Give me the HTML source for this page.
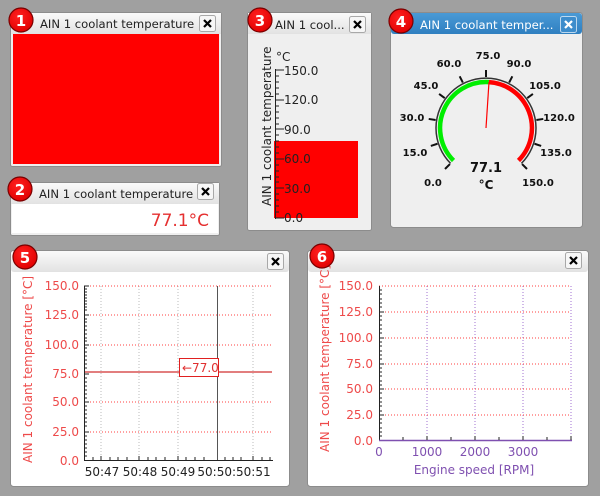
<!DOCTYPE html>
<html><head><meta charset="utf-8"><style>
html,body{margin:0;padding:0;background:#a0a0a0;}
svg{display:block;font-family:"DejaVu Sans","Liberation Sans",sans-serif;}
</style></head><body>
<svg width="600" height="496" viewBox="0 0 600 496" xmlns="http://www.w3.org/2000/svg">
<defs>
<linearGradient id="tg" x1="0" y1="0" x2="0" y2="1"><stop offset="0" stop-color="#fafafa"/><stop offset="1" stop-color="#e2e2e2"/></linearGradient>
<linearGradient id="bg" x1="0" y1="0" x2="0" y2="1"><stop offset="0" stop-color="#4a9ad6"/><stop offset="1" stop-color="#2f7fc0"/></linearGradient>
<radialGradient id="rb" cx="0.4" cy="0.35" r="0.7"><stop offset="0" stop-color="#ff2020"/><stop offset="1" stop-color="#e00000"/></radialGradient>
<g id="xb"><rect x="0.5" y="0.5" width="16" height="16" rx="2" fill="#f6f6f6" stroke="#a8a8a8"/><path d="M5 5L12 12M12 5L5 12" stroke="#000" stroke-width="2.2"/></g>
<g id="xw"><rect x="0.5" y="0.5" width="16" height="16" rx="2" fill="#3d8dcc" stroke="#bcd8ef"/><path d="M5 5L12 12M12 5L5 12" stroke="#fff" stroke-width="2.2"/></g>
</defs>
<rect width="600" height="496" fill="#a0a0a0"/>

<!-- Window 1 -->
<rect x="10.5" y="12.5" width="211" height="154" fill="#efefef" stroke="#8c8c8c" rx="2"/>
<rect x="11" y="13" width="210" height="21" fill="url(#tg)"/>
<text x="40" y="28" font-size="11.6" fill="#222">AIN 1 coolant temperature</text>
<use href="#xb" x="199" y="15"/>
<rect x="13" y="34" width="206" height="130" fill="#ff0000"/>

<!-- Window 2 -->
<rect x="10.5" y="182.5" width="209" height="53" fill="#efefef" stroke="#8c8c8c" rx="2"/>
<rect x="11" y="183" width="208" height="21" fill="url(#tg)"/>
<text x="39" y="198" font-size="11.6" fill="#222">AIN 1 coolant temperature</text>
<use href="#xb" x="197" y="183"/>
<rect x="12" y="204" width="206" height="29" fill="#fff"/>
<text x="209" y="226" font-size="17" fill="#e53030" text-anchor="end">77.1°C</text>

<!-- Window 3 -->
<rect x="247.5" y="12.5" width="124" height="218" fill="#efefef" stroke="#8c8c8c" rx="2"/>
<rect x="248" y="13" width="123" height="21" fill="url(#tg)"/>
<text x="275" y="29" font-size="11.6" fill="#222">AIN 1 cool...</text>
<use href="#xb" x="349" y="16"/>
<rect x="274" y="141" width="84" height="77" fill="#ff0000"/>
<g stroke="#222" stroke-width="1">
<line x1="275.5" y1="69" x2="275.5" y2="219"/>
<line x1="275" y1="70" x2="284" y2="70"/><line x1="275" y1="100" x2="284" y2="100"/><line x1="275" y1="129" x2="284" y2="129"/><line x1="275" y1="159" x2="284" y2="159"/><line x1="275" y1="188" x2="284" y2="188"/><line x1="275" y1="218" x2="284" y2="218"/>
</g>
<g stroke="#222">
<path d="M275 76h4M275 82h4M275 88h4M275 94h4M275 106h4M275 112h4M275 118h4M275 124h4M275 135h4M275 141h4M275 147h4M275 153h4M275 165h4M275 171h4M275 177h4M275 182h4M275 194h4M275 200h4M275 206h4M275 212h4"/>
</g>
<g font-size="12" fill="#222">
<text x="276" y="61">°C</text>
<text x="284" y="75">150.0</text><text x="284" y="104">120.0</text><text x="284" y="134">90.0</text><text x="284" y="163">60.0</text><text x="284" y="193">30.0</text><text x="284" y="222">0.0</text>
</g>
<text transform="translate(271,206) rotate(-90)" font-size="12" fill="#222">AIN 1 coolant temperature</text>

<!-- Window 4 -->
<rect x="390.5" y="12.5" width="192" height="215" fill="#efefef" stroke="#8c8c8c" rx="3"/>
<rect x="391" y="13" width="191" height="21" fill="url(#bg)" rx="3"/>
<text x="420" y="29" font-size="11.6" fill="#fff">AIN 1 coolant temper...</text>
<use href="#xw" x="560" y="16"/>
<path d="M450.6 163.4 A50 50 0 1 1 521.4 163.4" fill="none" stroke="#333" stroke-width="1.5"/>
<path d="M453.5 160.5 A46 46 0 0 1 488.9 82.1" fill="none" stroke="#00ee00" stroke-width="4.5"/>
<path d="M488.9 82.1 A46 46 0 0 1 518.5 160.5" fill="none" stroke="#ff0000" stroke-width="4.5"/>
<g stroke="#111" stroke-width="2">
<line x1="486" y1="77" x2="486" y2="70" transform="rotate(-135 486 128)"/>
<line x1="486" y1="77" x2="486" y2="70" transform="rotate(-108 486 128)"/>
<line x1="486" y1="77" x2="486" y2="70" transform="rotate(-81 486 128)"/>
<line x1="486" y1="77" x2="486" y2="70" transform="rotate(-54 486 128)"/>
<line x1="486" y1="77" x2="486" y2="70" transform="rotate(-27 486 128)"/>
<line x1="486" y1="77" x2="486" y2="70"/>
<line x1="486" y1="77" x2="486" y2="70" transform="rotate(27 486 128)"/>
<line x1="486" y1="77" x2="486" y2="70" transform="rotate(54 486 128)"/>
<line x1="486" y1="77" x2="486" y2="70" transform="rotate(81 486 128)"/>
<line x1="486" y1="77" x2="486" y2="70" transform="rotate(108 486 128)"/>
<line x1="486" y1="77" x2="486" y2="70" transform="rotate(135 486 128)"/>
</g>
<line x1="486" y1="128" x2="489" y2="82" stroke="#ff0000" stroke-width="1.2"/>
<g font-size="10" font-weight="bold" fill="#111" text-anchor="middle">
<text x="433" y="186">0.0</text><text x="415" y="156">15.0</text><text x="412" y="121">30.0</text><text x="426" y="89">45.0</text><text x="449" y="67">60.0</text><text x="488" y="59">75.0</text><text x="519" y="67">90.0</text><text x="545" y="89">105.0</text><text x="559" y="121">120.0</text><text x="556" y="156">135.0</text><text x="538" y="186">150.0</text>
<text x="486" y="172" font-size="13">77.1</text><text x="486" y="189" font-size="12">°C</text>
</g>

<!-- Window 5 -->
<rect x="10.5" y="250.5" width="279" height="236" fill="#fff" stroke="#8c8c8c" rx="3"/>
<rect x="11" y="251" width="278" height="21" fill="url(#tg)" rx="3"/>
<use href="#xb" x="267" y="253"/>
<g stroke="#bbb" stroke-dasharray="1,2"><line x1="101" y1="286" x2="101" y2="460"/><line x1="139" y1="286" x2="139" y2="460"/><line x1="178" y1="286" x2="178" y2="460"/><line x1="253" y1="286" x2="253" y2="460"/></g>
<g stroke="#ff4040" stroke-dasharray="1,2"><line x1="84" y1="286" x2="272" y2="286"/><line x1="84" y1="315" x2="272" y2="315"/><line x1="84" y1="345" x2="272" y2="345"/><line x1="84" y1="402" x2="272" y2="402"/><line x1="84" y1="432" x2="272" y2="432"/></g>
<line x1="84" y1="372" x2="272" y2="372" stroke="#d03030" stroke-width="1.2"/>
<line x1="217.5" y1="286" x2="217.5" y2="461" stroke="#555" stroke-width="1"/>
<line x1="84.5" y1="286" x2="84.5" y2="461" stroke="#222"/>
<line x1="84" y1="460.5" x2="273" y2="460.5" stroke="#222"/>
<path d="M84 289h3M84 292h3M84 295h3M84 298h3M84 301h3M84 304h3M84 307h3M84 310h3M84 319h3M84 322h3M84 326h3M84 330h3M84 334h3M84 338h3M84 341h3M84 348h3M84 352h3M84 356h3M84 360h3M84 364h3M84 368h3M84 378h3M84 382h3M84 386h3M84 390h3M84 394h3M84 398h3M84 406h3M84 410h3M84 414h3M84 418h3M84 422h3M84 426h3M84 436h3M84 440h3M84 444h3M84 448h3M84 452h3M84 456h3M84 286h5M84 315h5M84 345h5M84 374h5M84 402h5M84 432h5" stroke="#222"/>
<path d="M93 460v-3M101 460v-4M110 460v-3M118 460v-3M127 460v-3M139 460v-4M148 460v-3M156 460v-3M165 460v-3M178 460v-4M186 460v-3M195 460v-3M204 460v-3M225 460v-3M233 460v-3M241 460v-3M253 460v-4M262 460v-3M270 460v-3" stroke="#222"/>
<rect x="179.5" y="358.5" width="39" height="18" fill="#fff" stroke="#e02020"/>
<text x="182" y="372" font-size="12" fill="#e03030">←77.0</text>
<g font-size="12" fill="#ee4a4a" text-anchor="end">
<text x="79" y="290">150.0</text><text x="79" y="319">125.0</text><text x="79" y="349">100.0</text><text x="79" y="378">75.0</text><text x="79" y="406">50.0</text><text x="79" y="436">25.0</text><text x="79" y="465">0.0</text>
</g>
<text transform="translate(32,463) rotate(-90)" font-size="12" fill="#ee4a4a">AIN 1 coolant temperature [°C]</text>
<g font-size="12" fill="#222" text-anchor="middle"><text x="102" y="476">50:47</text><text x="140" y="476">50:48</text><text x="178" y="476">50:49</text><text x="234" y="476">50:50:50:51</text></g>

<!-- Window 6 -->
<rect x="307.5" y="250.5" width="281" height="236" fill="#fff" stroke="#8c8c8c" rx="3"/>
<rect x="308" y="251" width="280" height="21" fill="url(#tg)" rx="3"/>
<use href="#xb" x="565" y="252"/>
<g stroke="#a070d0" stroke-dasharray="1,2"><line x1="427" y1="286" x2="427" y2="440"/><line x1="475" y1="286" x2="475" y2="440"/><line x1="523" y1="286" x2="523" y2="440"/><line x1="571" y1="286" x2="571" y2="440"/></g>
<g stroke="#ff4040" stroke-dasharray="1,2"><line x1="379" y1="286" x2="571" y2="286"/><line x1="379" y1="312" x2="571" y2="312"/><line x1="379" y1="338" x2="571" y2="338"/><line x1="379" y1="364" x2="571" y2="364"/><line x1="379" y1="389" x2="571" y2="389"/><line x1="379" y1="415" x2="571" y2="415"/></g>
<line x1="379.5" y1="286" x2="379.5" y2="441" stroke="#222"/>
<line x1="379" y1="440.5" x2="572" y2="440.5" stroke="#7f50b0" stroke-width="1.5"/>
<path d="M379 290h3M379 294h3M379 299h3M379 303h3M379 307h3M379 316h3M379 320h3M379 325h3M379 329h3M379 333h3M379 342h3M379 346h3M379 351h3M379 355h3M379 359h3M379 368h3M379 372h3M379 376h3M379 381h3M379 385h3M379 393h3M379 398h3M379 402h3M379 406h3M379 411h3M379 419h3M379 423h3M379 428h3M379 432h3M379 436h3M379 312h5M379 338h5M379 364h5M379 389h5M379 415h5M403 440v-3M451 440v-3M499 440v-3M547 440v-3M427 440v-4M475 440v-4M523 440v-4M571 440v-4" stroke="#222"/>
<g font-size="12" fill="#ee4a4a" text-anchor="end">
<text x="373" y="290">150.0</text><text x="373" y="316">125.0</text><text x="373" y="342">100.0</text><text x="373" y="368">75.0</text><text x="373" y="393">50.0</text><text x="373" y="419">25.0</text><text x="373" y="445">0.0</text>
</g>
<text transform="translate(329,452) rotate(-90)" font-size="12" fill="#ee4a4a">AIN 1 coolant temperature [°C]</text>
<g font-size="12" fill="#7f50b0" text-anchor="middle"><text x="379" y="456">0</text><text x="427" y="456">1000</text><text x="475" y="456">2000</text><text x="523" y="456">3000</text><text x="474" y="474">Engine speed [RPM]</text></g>

<!-- badges -->
<g font-size="15" font-weight="bold" fill="#fff" text-anchor="middle" stroke-width="1.2">
<circle cx="21" cy="20" r="12" fill="url(#rb)" stroke="#7a0000"/><text x="21" y="26">1</text>
<circle cx="20" cy="189" r="12" fill="url(#rb)" stroke="#7a0000"/><text x="20" y="195">2</text>
<circle cx="260" cy="20" r="12" fill="url(#rb)" stroke="#7a0000"/><text x="260" y="26">3</text>
<circle cx="401" cy="21" r="12" fill="url(#rb)" stroke="#7a0000"/><text x="401" y="27">4</text>
<circle cx="25" cy="257" r="12" fill="url(#rb)" stroke="#7a0000"/><text x="25" y="263">5</text>
<circle cx="322" cy="256" r="12" fill="url(#rb)" stroke="#7a0000"/><text x="322" y="262">6</text>
</g>
</svg>
</body></html>
